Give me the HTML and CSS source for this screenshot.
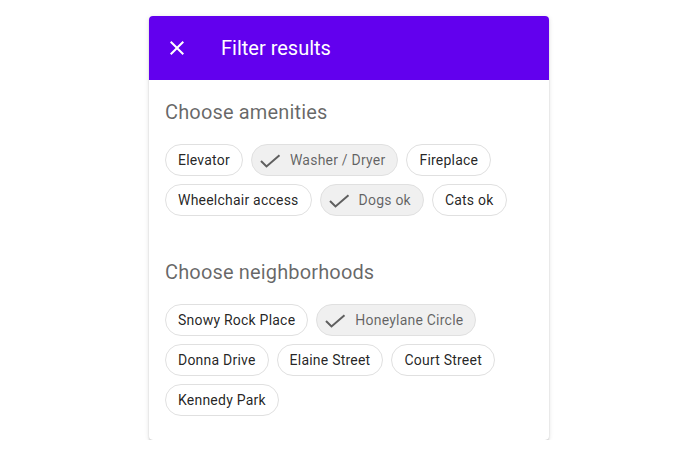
FILE: index.html
```html
<!DOCTYPE html>
<html>
<head>
<meta charset="utf-8">
<link rel="stylesheet" href="styles.css">
</head>
<body>
<div class="dialog">
  <header class="bar">
    <svg class="close" viewBox="0 0 24 24" width="24" height="24"><path fill="#fff" d="M19 6.41L17.59 5 12 10.59 6.41 5 5 6.41 10.59 12 5 17.59 6.41 19 12 13.41 17.59 19 19 17.59 13.41 12z"/></svg>
    <span class="title">Filter results</span>
  </header>
  <div class="content">
    <h2 class="heading">Choose amenities</h2>
    <div class="chips">
      <span class="chip">Elevator</span>
      <span class="chip selected"><svg class="check" viewBox="0 0 22 14" width="22" height="14"><polyline points="2,7 7.5,12.5 20.5,1.2"/></svg>Washer / Dryer</span>
      <span class="chip">Fireplace</span>
      <span class="chip">Wheelchair access</span>
      <span class="chip selected"><svg class="check" viewBox="0 0 22 14" width="22" height="14"><polyline points="2,7 7.5,12.5 20.5,1.2"/></svg>Dogs ok</span>
      <span class="chip">Cats ok</span>
    </div>
    <h2 class="heading second">Choose neighborhoods</h2>
    <div class="chips">
      <span class="chip">Snowy Rock Place</span>
      <span class="chip selected"><svg class="check" viewBox="0 0 22 14" width="22" height="14"><polyline points="2,7 7.5,12.5 20.5,1.2"/></svg>Honeylane Circle</span>
      <span class="chip">Donna Drive</span>
      <span class="chip">Elaine Street</span>
      <span class="chip">Court Street</span>
      <span class="chip">Kennedy Park</span>
    </div>
  </div>
</div>
</body>
</html>
```
FILE: styles.css
```css
html, body {
  margin: 0;
  padding: 0;
  background: #fff;
  font-family: Roboto, "Liberation Sans", sans-serif;
}
.dialog {
  width: 400px;
  margin: 16px auto 0;
  background: #fff;
  border-radius: 4px;
  overflow: hidden;
  box-shadow: 0 3px 1px -2px rgba(0,0,0,.2), 0 2px 2px 0 rgba(0,0,0,.14), 0 1px 5px 0 rgba(0,0,0,.12);
}
.bar {
  height: 64px;
  background: #6200ee;
  display: flex;
  align-items: center;
  padding: 0 16px;
  color: #fff;
}
.close {
  display: block;
  flex: none;
}
.title {
  margin-left: 32px;
  font-size: 20px;
  font-weight: 400;
  letter-spacing: 0;
}
.content {
  padding: 16px 16px 24px;
}
.heading {
  margin: 0 0 16px;
  font-size: 20px;
  line-height: 32px;
  font-weight: 400;
  color: rgba(0,0,0,.6);
  letter-spacing: 0.15px;
}
.heading.second {
  margin-top: 40px;
}
.chips {
  display: flex;
  flex-wrap: wrap;
  gap: 8px;
}
.chip {
  box-sizing: border-box;
  height: 32px;
  display: inline-flex;
  align-items: center;
  padding: 0 12px;
  border: 1px solid #e0e0e0;
  border-radius: 16px;
  font-size: 14px;
  letter-spacing: 0.22px;
  color: rgba(0,0,0,.87);
  background: #fff;
}
.chip.selected {
  background: #f0f0f0;
  padding-left: 7px;
  color: rgba(0,0,0,.6);
}
.check {
  fill: none;
  stroke: #5f5f5f;
  stroke-width: 2;
  margin-right: 9px;
  margin-top: 2px;
  flex: none;
}
```
